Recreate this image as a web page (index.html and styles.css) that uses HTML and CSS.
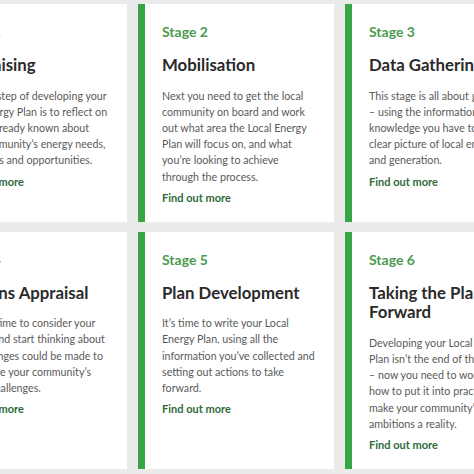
FILE: index.html
```html
<!DOCTYPE html>
<html lang="en">
<head>
<meta charset="utf-8">
<title>Local Energy Plan stages</title>
<link rel="stylesheet" href="styles.css">
</head>
<body>
<main class="viewport">
  <section class="stages">
    <article class="card">
      <p class="stage">Stage 1</p>
      <h2 class="title">Organising</h2>
      <p class="text">The first step of developing your Local Energy Plan is to reflect on what is already known about your community’s energy needs, challenges and opportunities.</p>
      <a class="more" href="#">Find out more</a>
    </article>
    <article class="card">
      <p class="stage">Stage 2</p>
      <h2 class="title">Mobilisation</h2>
      <p class="text">Next you need to get the local community on board and work out what area the Local Energy Plan will focus on, and what you’re looking to achieve through the process.</p>
      <a class="more" href="#">Find out more</a>
    </article>
    <article class="card">
      <p class="stage">Stage 3</p>
      <h2 class="title">Data Gathering</h2>
      <p class="text">This stage is all about gathering<br>– using the information and<br>knowledge you have to build a<br>clear picture of local energy use<br>and generation.</p>
      <a class="more" href="#">Find out more</a>
    </article>
    <article class="card">
      <p class="stage">Stage 4</p>
      <h2 class="title">Options Appraisal</h2>
      <p class="text">Now it’s time to consider your options and start thinking about what changes could be made to help tackle your community’s energy challenges.</p>
      <a class="more" href="#">Find out more</a>
    </article>
    <article class="card">
      <p class="stage">Stage 5</p>
      <h2 class="title">Plan Development</h2>
      <p class="text">It’s time to write your Local Energy Plan, using all the information you’ve collected and setting out actions to take forward.</p>
      <a class="more" href="#">Find out more</a>
    </article>
    <article class="card">
      <p class="stage">Stage 6</p>
      <h2 class="title">Taking the Plan Forward</h2>
      <p class="text">Developing your Local Energy<br>Plan isn’t the end of the process<br>– now you need to work out<br>how to put it into practice to<br>make your community’s<br>ambitions a reality.</p>
      <a class="more" href="#">Find out more</a>
    </article>
  </section>
</main>
</body>
</html>
```

FILE: styles.css
```css
html, body {
  margin: 0;
  padding: 0;
  background: #ebebeb;
}
body {
  width: 474px;
  height: 474px;
  overflow: hidden;
  font-family: "Lato", "Liberation Sans", sans-serif;
}
.viewport {
  padding-top: 4px;
}
.stages {
  display: grid;
  grid-template-columns: repeat(3, 196px);
  column-gap: 11px;
  row-gap: 10px;
  margin-left: -69px;
  width: 610px;
}
.card {
  background: #ffffff;
  border-left: 7px solid #37a646;
  padding: 18px 16px 16px 17px;
  display: flex;
  flex-direction: column;
  align-items: flex-start;
}
.stage {
  margin: 0;
  font-size: 14px;
  line-height: 20px;
  font-weight: 700;
  color: #4b9b50;
}
.title {
  margin: 13px 0 0 0;
  font-size: 16.8px;
  line-height: 19.5px;
  font-weight: 700;
  color: #2a2a2a;
}
.text {
  margin: 13px 0 0 0;
  font-size: 10.7px;
  line-height: 16.2px;
  color: #5a5a5a;
}
.more {
  margin-top: 5px;
  font-size: 11px;
  line-height: 16px;
  font-weight: 700;
  color: #2f6b3a;
  text-decoration: none;
}
```
